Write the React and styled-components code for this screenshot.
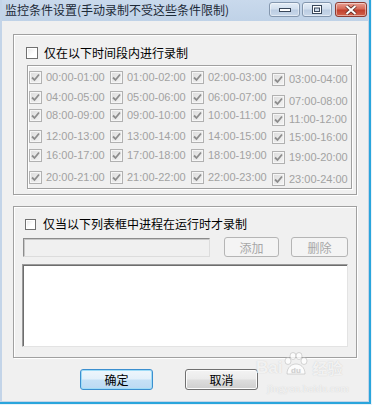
import React from "react";
import styled, { createGlobalStyle } from "styled-components";

const CJK = `"Noto Sans CJK SC", "Noto Sans", sans-serif`;

const SLOTS = Array.from({ length: 24 }, (_, i) => {
  const pad = (n) => String(n).padStart(2, "0");
  return `${pad(i)}:00-${pad(i + 1)}:00`;
});

// fourth column sits a little lower than the others in the dialog
const COL4_DROP = [2, 4, 4, 1, 2, 2];

const GlobalStyle = createGlobalStyle`
  html, body {
    margin: 0;
    padding: 0;
    background: #fff;
  }
  body {
    font-family: ${CJK};
  }
`;

const Window = styled.div`
  position: relative;
  width: 372px;
  height: 405px;
  box-sizing: border-box;
  padding: 0 4px 4px 2px;
  display: flex;
  flex-direction: column;
  background: #c3d4e8;
  box-shadow: inset -1px -1px 0 #eaf2f8, inset -3px -3px 0 #2aa5dc;
  overflow: hidden;
`;

const TitleBar = styled.div`
  height: 21px;
  display: flex;
  justify-content: space-between;
  align-items: flex-start;
  background: linear-gradient(#c9d9ec, #bfd2e7);
`;

const Title = styled.div`
  padding-left: 3px;
  font-size: 12px;
  line-height: 20px;
  color: #1c2a38;
  letter-spacing: 0;
`;

const Controls = styled.div`
  display: flex;
  margin-top: 2px;
  margin-right: 1px;
`;

const CtrlButton = styled.div`
  width: ${(p) => p.$w}px;
  height: 15px;
  margin-left: ${(p) => p.$ml}px;
  box-sizing: border-box;
  border: 1px solid ${(p) => (p.$close ? "#8e3b31" : "#8497ae")};
  border-radius: 3px;
  display: flex;
  align-items: center;
  justify-content: center;
  background: ${(p) =>
    p.$close
      ? "linear-gradient(#e8a094 0%, #d66a58 45%, #c2402e 55%, #d0624c 100%)"
      : "linear-gradient(#e4edf7 0%, #d2dfee 45%, #bccde2 55%, #c9d8ea 100%)"};
  box-shadow: inset 0 0 0 1px rgba(255, 255, 255, 0.45);
`;

const Client = styled.div`
  flex: 1;
  background: #f0f0f0;
  padding: 13px 11px 0 11px;
  display: flex;
  flex-direction: column;
`;

const Group = styled.div`
  width: 344px;
  height: ${(p) => p.$h}px;
  box-sizing: border-box;
  border: 1px solid #a0a0a0;
  box-shadow: 1px 1px 0 #fff, inset 1px 1px 0 #fff;
  padding: ${(p) => p.$pad};
  display: flex;
  flex-direction: column;
  margin-bottom: ${(p) => p.$mb || 0}px;
`;

const CheckRow = styled.label`
  display: flex;
  align-items: center;
  gap: ${(p) => p.$gap}px;
  height: 12px;
  margin-left: ${(p) => p.$ml || 0}px;
  font-size: 12px;
  line-height: 12px;
  color: #000;
`;

const Box = styled.span`
  flex: none;
  width: ${(p) => p.$size}px;
  height: ${(p) => p.$size}px;
  box-sizing: border-box;
  border: 1px solid ${(p) => (p.$disabled ? "#b1b1b1" : "#707070")};
  background: ${(p) =>
    p.$disabled
      ? "linear-gradient(135deg, #dcdcdc, #f4f4f4)"
      : "linear-gradient(135deg, #e6e6e6, #ffffff 60%)"};
  box-shadow: inset 0 0 0 1px ${(p) => (p.$disabled ? "#f6f6f6" : "#fff")};
  display: flex;
  align-items: center;
  justify-content: center;
`;

const TimeFrame = styled.div`
  margin: 6px 0 0 1px;
  width: 325px;
  height: 125px;
  box-sizing: border-box;
  border: 1px solid #a0a0a0;
  box-shadow: 1px 1px 0 #fff, inset 1px 1px 0 #fff;
  padding: 5px 0 0 1px;
  display: grid;
  grid-template-columns: repeat(4, 81px);
  grid-template-rows: 20px 18px 21px 19px 22px 13px;
  align-items: start;
`;

const Slot = styled.div`
  display: flex;
  align-items: center;
  gap: 4px;
  height: 13px;
  margin-top: ${(p) => p.$drop || 0}px;
`;

const SlotText = styled.span`
  font-family: "Liberation Sans", Arial, sans-serif;
  font-size: 11px;
  line-height: 13px;
  color: #a2a2a2;
  white-space: nowrap;
`;

const InputRow = styled.div`
  display: flex;
  align-items: center;
  margin: 7px 0 0 1px;
  height: 20px;
`;

const TextField = styled.div`
  width: 187px;
  height: 19px;
  box-sizing: border-box;
  background: #f0f0f0;
  border: 1px solid;
  border-color: #8c8c8c #dcdcdc #dcdcdc #8c8c8c;
  box-shadow: inset 1px 1px 0 #c8c8c8;
`;

const SmallButton = styled.div`
  width: ${(p) => p.$w}px;
  height: 20px;
  margin-left: ${(p) => p.$ml}px;
  box-sizing: border-box;
  border: 1px solid #b5b5b5;
  border-radius: 3px;
  background: #f4f4f4;
  display: flex;
  align-items: center;
  justify-content: center;
  font-size: 12px;
  color: #a7a7a7;
`;

const ListBox = styled.div`
  margin-top: 7px;
  width: 326px;
  height: 83px;
  box-sizing: border-box;
  background: #fff;
  border: 1px solid;
  border-color: #9a9a9a #e3e3e3 #e3e3e3 #9a9a9a;
  box-shadow: inset 1px 1px 0 #6d6d6d;
`;

const Footer = styled.div`
  display: flex;
  gap: 32px;
  padding-left: 67px;
  margin-top: 11px;
`;

const DialogButton = styled.div`
  width: 73px;
  height: 21px;
  box-sizing: border-box;
  border: 1px solid ${(p) => (p.$focus ? "#3c8fcf" : "#707070")};
  border-radius: 3px;
  background: ${(p) =>
    p.$focus
      ? "linear-gradient(#eef6fc 0%, #e3f0fa 48%, #c6e1f6 52%, #bcdaf3 100%)"
      : "linear-gradient(#f3f3f3 0%, #ebebeb 48%, #dddddd 52%, #cfcfcf 100%)"};
  box-shadow: inset 0 0 0 1px ${(p) => (p.$focus ? "#9fdcf7" : "#fcfcfc")};
  display: flex;
  align-items: center;
  justify-content: center;
  font-size: 12px;
  color: #000;
`;

const Watermark = styled.div`
  position: absolute;
  left: 256px;
  top: 352px;
  display: flex;
  flex-direction: column;
  align-items: flex-start;
  color: rgba(255, 255, 255, 0.75);
  text-shadow: 0 0 1px rgba(120, 120, 120, 0.35);
  pointer-events: none;
`;

const MarkLogo = styled.div`
  display: flex;
  align-items: flex-end;
  font-family: "Liberation Sans", Arial, sans-serif;
  font-weight: bold;
  font-size: 17px;
  line-height: 20px;
  height: 26px;
`;

const MarkCJK = styled.span`
  font-family: ${CJK};
  font-size: 15px;
  margin-left: 2px;
`;

const MarkUrl = styled.div`
  margin: 4px 0 0 11px;
  font-family: "Liberation Serif", serif;
  font-size: 11px;
  line-height: 12px;
`;

const Check = () => (
  <svg width="9" height="9" viewBox="0 0 9 9">
    <path d="M1 4.5 L3.5 7 L8 1.5" fill="none" stroke="#8d8d8d" strokeWidth="1.8" />
  </svg>
);

const Paw = () => (
  <svg width="28" height="26" viewBox="0 0 28 26">
    <g fill="rgba(255,255,255,0.8)" stroke="rgba(130,130,130,0.3)" strokeWidth="1">
      <ellipse cx="6" cy="9" rx="3" ry="3.5" />
      <ellipse cx="11" cy="4" rx="3" ry="3.5" />
      <ellipse cx="17" cy="4" rx="3" ry="3.5" />
      <ellipse cx="22" cy="9" rx="3" ry="3.5" />
      <path d="M5 22 C5 15 10 12 14 12 C18 12 23 15 23 22 Z" />
    </g>
    <text x="14" y="21" textAnchor="middle" fontSize="8" fontFamily="Liberation Sans" fontWeight="bold" fill="rgba(190,190,190,0.6)">
      du
    </text>
  </svg>
);

const MinGlyph = () => (
  <svg width="12" height="6" viewBox="0 0 12 6">
    <rect x="0.5" y="1.5" width="11" height="3" fill="#fff" stroke="#39475a" />
  </svg>
);

const MaxGlyph = () => (
  <svg width="10" height="9" viewBox="0 0 10 9">
    <rect x="0.5" y="0.5" width="9" height="8" fill="#fff" stroke="#39475a" />
    <rect x="2.5" y="3" width="5" height="3.5" fill="#cfdbea" stroke="#39475a" />
  </svg>
);

const CloseGlyph = () => (
  <svg width="12" height="10" viewBox="0 0 12 10">
    <path d="M1.5 1 L10.5 9 M10.5 1 L1.5 9" stroke="#5a2a24" strokeWidth="3.6" />
    <path d="M1.5 1 L10.5 9 M10.5 1 L1.5 9" stroke="#fff" strokeWidth="2" />
  </svg>
);

const App = () => {
  const cells = [];
  for (let row = 0; row < 6; row++) {
    for (let col = 0; col < 4; col++) {
      const i = row * 4 + col;
      cells.push(
        <Slot key={i} $drop={col === 3 ? COL4_DROP[row] : 0}>
          <Box $size={13} $disabled>
            <Check />
          </Box>
          <SlotText>{SLOTS[i]}</SlotText>
        </Slot>
      );
    }
  }

  return (
    <>
      <GlobalStyle />
      <Window>
        <TitleBar>
          <Title>监控条件设置(手动录制不受这些条件限制)</Title>
          <Controls>
            <CtrlButton $w={31} $ml={0}>
              <MinGlyph />
            </CtrlButton>
            <CtrlButton $w={30} $ml={2}>
              <MaxGlyph />
            </CtrlButton>
            <CtrlButton $w={32} $ml={3} $close>
              <CloseGlyph />
            </CtrlButton>
          </Controls>
        </TitleBar>

        <Client>
          <Group $h={161} $pad="12px 5px 5px 12px" $mb={11}>
            <CheckRow $gap={6}>
              <Box $size={12} />
              仅在以下时间段内进行录制
            </CheckRow>
            <TimeFrame>{cells}</TimeFrame>
          </Group>

          <Group $h={152} $pad="11px 8px 0 8px">
            <CheckRow $gap={7} $ml={3}>
              <Box $size={11} />
              仅当以下列表框中进程在运行时才录制
            </CheckRow>
            <InputRow>
              <TextField />
              <SmallButton $w={55} $ml={14}>添加</SmallButton>
              <SmallButton $w={57} $ml={12}>删除</SmallButton>
            </InputRow>
            <ListBox />
          </Group>

          <Footer>
            <DialogButton $focus>确定</DialogButton>
            <DialogButton>取消</DialogButton>
          </Footer>
        </Client>

        <Watermark>
          <MarkLogo>
            Bai
            <Paw />
            <MarkCJK>经验</MarkCJK>
          </MarkLogo>
          <MarkUrl>jingyan.baidu.com</MarkUrl>
        </Watermark>
      </Window>
    </>
  );
};

export default App;
